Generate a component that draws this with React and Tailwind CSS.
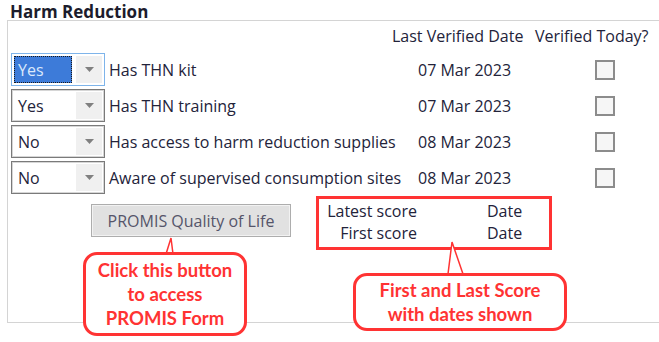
import React from 'react';

const rows = [
    { value: 'Yes', label: 'Has THN kit', date: '07 Mar 2023', focused: true },
    { value: 'Yes', label: 'Has THN training', date: '07 Mar 2023' },
    { value: 'No', label: 'Has access to harm reduction supplies', date: '08 Mar 2023' },
    { value: 'No', label: 'Aware of supervised consumption sites', date: '08 Mar 2023' },
];

function Select({ value, focused }) {
    return (
        <div
            className={
                'flex h-[33px] w-[94px] items-stretch border bg-white p-[2px] ' +
                (focused ? 'border-[#7eb4ea]' : 'border-[#7a7a7a] shadow-[inset_0_0_0_1px_#d6d6d6]')
            }
        >
            <div className="flex flex-1 items-center pr-[4px]">
                {focused ? (
                    <div className="flex h-full w-full items-center border border-dotted border-[#1a1a1a] bg-[#3d7bd9] pl-[3px] text-[#dbe8fb]">
                        {value}
                    </div>
                ) : (
                    <span className="pl-[4px]">{value}</span>
                )}
            </div>
            <div className="flex w-[26px] items-center justify-center bg-[#f0f0f0]">
                <svg width="9" height="5" viewBox="0 0 9 5">
                    <path d="M0 0 L9 0 L4.5 5 Z" fill="#808080" />
                </svg>
            </div>
        </div>
    );
}

function Checkbox() {
    return <div className="ml-[60px] h-[20px] w-[20px] border-2 border-[#8c8c8c] bg-[#f6f6f6]" />;
}

export default function App() {
    return (
        <div
            className="relative h-[342px] w-[659px] overflow-hidden bg-white text-[16px] text-[#23233a]"
            style={{ fontFamily: '"Open Sans", sans-serif' }}
        >
            <div className="h-[20px] pl-[10px] pt-[4px] text-[17px] font-bold leading-[16px] text-[#1c1c2c]">
                Harm Reduction
            </div>

            <div className="ml-[7px] h-[303px] border-t border-b border-l border-[#d4d4d4]">
                {/* column headers */}
                <div className="grid h-[29px] grid-cols-[94px_287px_143px_1fr] items-center pl-[3px]">
                    <div />
                    <div />
                    <div className="whitespace-nowrap">Last Verified Date</div>
                    <div className="whitespace-nowrap">Verified Today?</div>
                </div>

                <div className="flex flex-col gap-[3px] pt-[3px]">
                    {rows.map((row) => (
                        <div key={row.label} className="grid h-[33px] grid-cols-[94px_287px_143px_1fr] items-center pl-[3px]">
                            <Select value={row.value} focused={row.focused} />
                            <div className="whitespace-nowrap pl-[4px]">{row.label}</div>
                            <div className="whitespace-nowrap pl-[26px]">{row.date}</div>
                            <Checkbox />
                        </div>
                    ))}
                </div>

                <div className="mt-[2px] flex items-start pl-[83px]">
                    <button className="mt-[8px] h-[33px] w-[200px] border border-[#adadad] bg-[#e1e1e1] text-[#55556a] shadow-[inset_0_0_0_1px_#f2f2f2]">
                        PROMIS Quality of Life
                    </button>
                    <div className="ml-[25px] grid h-[54px] w-[236px] grid-cols-[98px_1fr] content-start border-[3px] border-[#ff3333] pt-[1px] leading-[22px]">
                        <div className="whitespace-nowrap text-right">Latest score</div>
                        <div className="pl-[70px]">Date</div>
                        <div className="whitespace-nowrap text-right">First score</div>
                        <div className="pl-[70px]">Date</div>
                    </div>
                </div>
            </div>

            {/* callout: button */}
            <svg className="absolute left-[160px] top-[236px]" width="20" height="20" viewBox="0 0 20 20">
                <path d="M6 18 L11 2 L13 18" fill="white" stroke="#ff3333" strokeWidth="1.5" />
            </svg>
            <div
                className="absolute left-[83px] top-[252px] flex h-[84px] w-[164px] flex-col items-center justify-center rounded-[14px] border-[3px] border-[#ff3333] bg-white text-[18.5px] font-bold leading-[24px] text-[#ff3333]"
                style={{ fontFamily: 'Lato, sans-serif' }}
            >
                <div className="whitespace-nowrap">Click this button</div>
                <div className="whitespace-nowrap">to access</div>
                <div className="whitespace-nowrap">PROMIS Form</div>
            </div>

            {/* callout: scores */}
            <svg className="absolute left-[444px] top-[240px]" width="24" height="36" viewBox="0 0 24 36">
                <path d="M4 34 L8 2 L19 34" fill="white" stroke="#ff3333" strokeWidth="1.5" />
            </svg>
            <div
                className="absolute left-[353px] top-[273px] flex h-[58px] w-[214px] flex-col items-center justify-center rounded-[14px] border-[3px] border-[#ff3333] bg-white text-[18.5px] font-bold leading-[24px] text-[#ff3333]"
                style={{ fontFamily: 'Lato, sans-serif' }}
            >
                <div className="whitespace-nowrap">First and Last Score</div>
                <div className="whitespace-nowrap">with dates shown</div>
            </div>
        </div>
    );
}
